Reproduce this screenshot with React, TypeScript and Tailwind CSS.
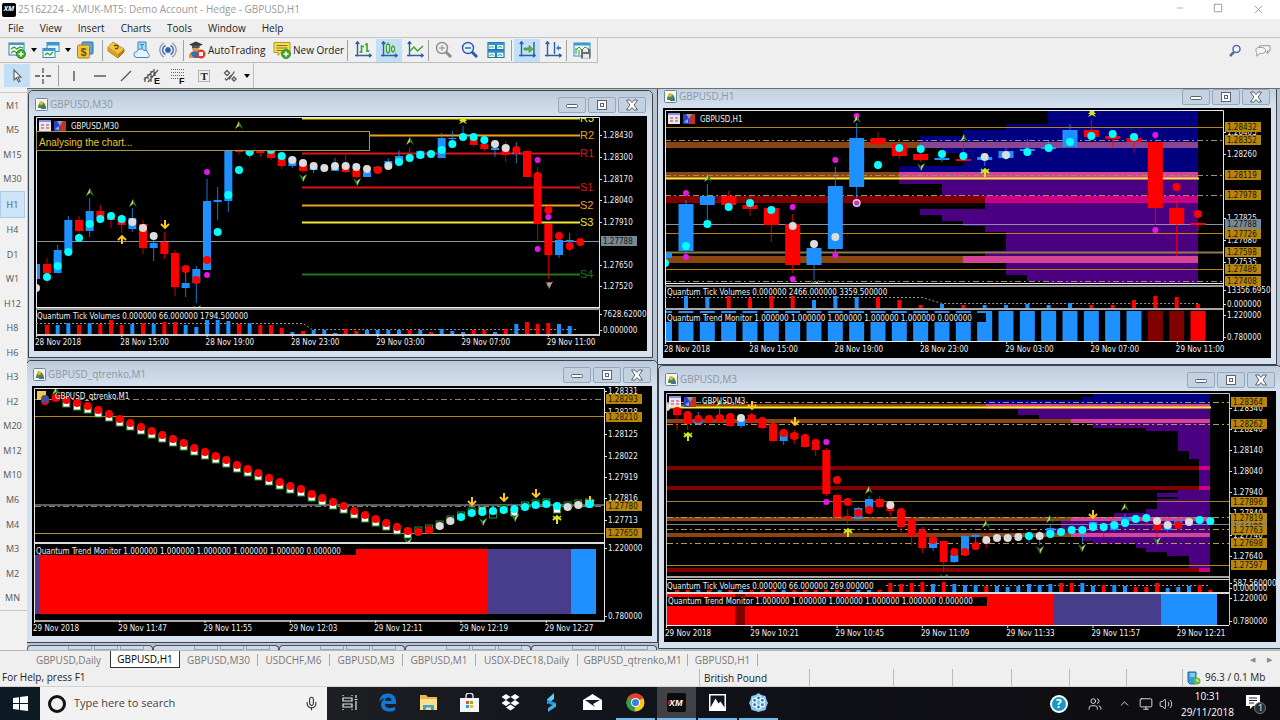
import type { ReactNode } from 'react'
import { ChevronUp, Mic, Minus, Monitor, Square, Users, Volume2, X } from 'lucide-react'

type Tone = 'b' | 'r' | 'c' | 'w' | 'm' | 'k'
// slot, high, body top, body bottom, low, tone
type Candle = [number, number, number, number, number, Tone]
// slot, y, tone
type Dot = [number, number, Tone]
type Mark = [number, number, MarkKind]
type MarkKind = 'up' | 'down' | 'buy' | 'sell' | 'star' | 'starBuy'
// y1, y2, left edge
type Step = [number, number, number]

const tones: Record<Tone, string> = {
  b: '#1e90ff',
  r: '#ff0000',
  c: '#00ffff',
  w: '#dcdcdc',
  m: '#e815e8',
  k: '#800000',
}

const GOLD = '#b8860b'
const BROWN = '#8b4513'

/* ---------- chart primitives ---------- */

function Label({ x, y, children, fill = '#f0f0f0' }: { x: number; y: number; children: ReactNode; fill?: string }) {
  return (
    <text x={x} y={y + 3} fill={fill} className="text-[8px] font-['DejaVu_Sans_Condensed','DejaVu_Sans',sans-serif]">
      {children}
    </text>
  )
}

function Badge({ x, y, text, gray }: { x: number; y: number; text: string; gray?: boolean }) {
  return (
    <g>
      <rect x={x - 2} y={y - 5} width="36" height="10" fill={gray ? '#778899' : GOLD} />
      <Label x={x} y={y} fill="#1a1408">
        {text}
      </Label>
    </g>
  )
}

function HLine({ x1, x2, y, color, w = 1, dash }: { x1: number; x2: number; y: number; color: string; w?: number; dash?: boolean }) {
  return <line x1={x1} x2={x2} y1={y} y2={y} stroke={color} strokeWidth={w} strokeDasharray={dash ? '6 3 2 3' : undefined} />
}

function Candles({ data, x0, step, width }: { data: Candle[]; x0: number; step: number; width: number }) {
  return (
    <g>
      {data.map(([i, high, top, bottom, low, tone]) => {
        const cx = x0 + i * step
        return (
          <g key={i} fill={tones[tone]}>
            <rect x={cx - 0.5} y={high} width="1" height={low - high} opacity="0.8" />
            <rect x={cx - width / 2} y={top} width={width} height={bottom - top} />
          </g>
        )
      })}
    </g>
  )
}

function Dots({ data, x0, step }: { data: Dot[]; x0: number; step: number }) {
  return (
    <g>
      {data.map(([i, y, tone]) => (
        <circle key={`${i}-${y}`} cx={x0 + i * step} cy={y} r={tone === 'm' ? 3 : 4} fill={tones[tone]} />
      ))}
    </g>
  )
}

// each level is a tone and a height: "b9" is a blue bar nine high
function Volumes({ levels, x0, step, base, width }: { levels: string; x0: number; step: number; base: number; width: number }) {
  return (
    <g>
      {levels.split(' ').map((item, i) => {
        const h = Number(item.slice(1))
        return <rect key={i} x={x0 + i * step - width / 2} y={base - h} width={width} height={h} fill={tones[item[0] as Tone]} />
      })}
    </g>
  )
}

function Profile({ steps, right, color }: { steps: Step[]; right: number; color: string }) {
  return (
    <g className="mix-blend-plus-lighter" fill={color} shapeRendering="crispEdges">
      {steps.map(([y1, y2, x]) => (
        <rect key={y1} x={x} y={y1} width={right - x} height={y2 - y1} />
      ))}
    </g>
  )
}

function Marker({ x, y, kind }: { x: number; y: number; kind: MarkKind }) {
  const at = `translate(${x} ${y})`
  if (kind === 'up' || kind === 'down') {
    return (
      <g transform={kind === 'up' ? at : `${at} rotate(180)`}>
        <path d="M0-4 4 4 0 1Z" fill="#2f7a2a" />
        <path d="M0-4-4 4 0 1Z" fill="#a4d65e" />
      </g>
    )
  }
  if (kind === 'star') {
    return <path transform={at} d="M-4-4-1-2 0-4 1-2 4-4 2-1 4 1 2 1 4 4 0 2-4 4-2 1-4 1-2-1Z" fill="#d4e51e" />
  }
  return (
    <g transform={kind === 'sell' ? at : `${at} rotate(180)`} fill="none" stroke={kind === 'starBuy' ? '#d4e51e' : '#ffc81e'}>
      <path d="M0-4V4" strokeWidth="2" />
      <path d="M-4 0 0 4 4 0" strokeWidth="1.8" />
      {kind === 'starBuy' && <path d="M-4 4 0 0 4 4" strokeWidth="1.4" />}
    </g>
  )
}

function Marks({ data }: { data: Mark[] }) {
  return (
    <g>
      {data.map(([x, y, kind]) => (
        <Marker key={`${x}-${y}`} x={x} y={y} kind={kind} />
      ))}
    </g>
  )
}

function Axis({ x, rows }: { x: number; rows: [number, string][] }) {
  return (
    <g>
      {rows.map(([y, text]) => (
        <g key={`${y}${text}`}>
          <line x1={x - 4} x2={x - 1} y1={y + 0.5} y2={y + 0.5} stroke="#e0e0e0" />
          <Label x={x} y={y}>
            {text}
          </Label>
        </g>
      ))}
    </g>
  )
}

function Badges({ x, rows }: { x: number; rows: [number, string][] }) {
  return (
    <g>
      {rows.map(([y, text]) => (
        <Badge key={y} x={x} y={y} text={text} gray={text === '1.27788'} />
      ))}
    </g>
  )
}

function Dates({ x, y, step, labels }: { x: number; y: number; step: number; labels: string[] }) {
  return (
    <g>
      {labels.map((text, i) => (
        <g key={text}>
          <line x1={x + i * step + 0.5} x2={x + i * step + 0.5} y1={y - 8} y2={y - 5} stroke="#e0e0e0" />
          <Label x={x + i * step - 1} y={y}>
            {text}
          </Label>
        </g>
      ))}
    </g>
  )
}

function PanelIcons({ x, y }: { x: number; y: number }) {
  return (
    <g>
      <rect x={x} y={y} width="12" height="11" fill="#e6e6fa" />
      <rect x={x} y={y} width="12" height="2" fill="#8c8ce0" />
      <path d={`M${x + 2} ${y + 4}h3v2h-3zM${x + 2} ${y + 7}h3v2h-3z`} fill="#e08a8a" />
      <path d={`M${x + 7} ${y + 4}h3v2h-3zM${x + 7} ${y + 7}h3v2h-3z`} fill="#e08a8a" />
      <rect x={x + 15} y={y + 1} width="6" height="10" fill="#2a3fd0" />
      <rect x={x + 21} y={y + 1} width="6" height="10" fill="#c03030" />
      <path d={`M${x + 18} ${y + 1}h6l-3 5z`} fill="#8fa0b0" />
      <path d={`M${x + 16} ${y + 9}l4-3v4z`} fill="#7fb4ff" />
    </g>
  )
}

function ChartSvg({ box, name, children }: { box: string; name: string; children: ReactNode }) {
  return (
    <svg viewBox={box} role="img" aria-label={name} className="block h-full w-full isolate bg-black">
      {children}
    </svg>
  )
}

const STEP = 32 / 3

/* ---------- GBPUSD,M30 ---------- */

const m30Candles: Candle[] = [
  [0, 258, 264, 273, 283, 'r'], [1, 245, 250, 273, 273, 'b'], [2, 216, 220, 253, 253, 'b'],
  [3, 216, 220, 231, 234, 'r'], [4, 198, 211, 231, 237, 'b'], [5, 205, 211, 218, 218, 'r'],
  [6, 212, 217, 220, 228, 'r'], [7, 214, 218, 225, 233, 'r'], [8, 208, 218, 229, 232, 'b'],
  [9, 220, 224, 248, 254, 'r'], [10, 234, 243, 248, 261, 'b'], [11, 232, 242, 254, 259, 'r'],
  [12, 250, 253, 287, 296, 'r'], [13, 267, 283, 288, 297, 'b'], [14, 266, 269, 283, 303, 'b'],
  [15, 179, 201, 270, 270, 'b'], [16, 187, 200, 202, 220, 'b'], [17, 151, 151, 201, 212, 'b'],
  [18, 151, 151, 152, 155, 'r'], [19, 151, 151, 154, 158, 'b'], [20, 151, 151, 153, 157, 'r'],
  [21, 151, 151, 158, 160, 'r'], [22, 152, 155, 166, 169, 'r'], [23, 156, 158, 166, 168, 'b'],
  [24, 160, 163, 171, 173, 'r'], [25, 164, 168, 170, 173, 'b'], [27, 158, 168, 171, 171, 'b'],
  [28, 155, 165, 172, 173, 'r'], [29, 164, 170, 177, 178, 'r'], [30, 168, 172, 177, 177, 'b'],
  [31, 166, 167, 171, 173, 'b'], [32, 158, 161, 165, 168, 'b'], [33, 150, 156, 162, 165, 'b'],
  [34, 147, 156, 158, 160, 'r'], [35, 150, 151, 158, 159, 'b'], [36, 150, 152, 154, 157, 'b'],
  [37, 133, 138, 158, 158, 'b'], [38, 131, 138, 139, 148, 'b'], [39, 126, 134, 138, 140, 'b'],
  [40, 136, 138, 145, 147, 'r'], [41, 140, 144, 149, 151, 'r'], [42, 140, 148, 150, 157, 'b'],
  [43, 141, 146, 155, 162, 'r'], [44, 142, 152, 154, 163, 'b'], [45, 151, 151, 177, 177, 'r'],
  [46, 167, 174, 224, 243, 'r'], [47, 224, 224, 255, 279, 'r'], [48, 236, 240, 255, 258, 'b'],
  [49, 233, 240, 242, 251, 'b'],
]

const m30Dots: Dot[] = [
  [0, 277, 'c'], [1, 266, 'c'], [2, 252, 'c'], [3, 238, 'c'], [4, 224, 'c'], [5, 219, 'c'], [6, 216, 'c'],
  [7, 219, 'c'], [8, 222, 'w'], [9, 228, 'w'], [10, 236, 'w'], [13, 269, 'r'], [14, 280, 'r'], [15, 260, 'r'],
  [15, 172, 'm'], [15, 275, 'm'], [16, 232, 'c'], [17, 195, 'c'], [18, 170, 'c'], [19, 152, 'c'], [21, 150, 'c'],
  [22, 156, 'c'], [23, 160, 'w'], [24, 163, 'w'], [25, 166, 'w'], [26, 168, 'w'], [27, 166, 'w'], [28, 166, 'w'],
  [29, 167, 'w'], [30, 169, 'w'], [31, 170, 'r'], [32, 166, 'w'], [33, 162, 'c'], [34, 158, 'c'], [35, 155, 'c'],
  [36, 154, 'c'], [37, 150, 'c'], [38, 144, 'c'], [39, 137, 'c'], [40, 137, 'c'], [41, 140, 'c'], [42, 144, 'w'],
  [43, 148, 'w'], [44, 150, 'r'], [46, 176, 'r'], [46, 160, 'm'], [46, 249, 'm'], [47, 210, 'r'], [47, 217, 'm'],
  [48, 236, 'r'], [49, 246, 'r'], [50, 242, 'r'],
]

const pivots: [number, string, string][] = [
  [118, '#f0e83c', 'R3'],
  [135, '#f0a01e', 'R2'],
  [153, '#e01414', 'R1'],
  [187, '#e01414', 'S1'],
  [205, '#f0a01e', 'S2'],
  [222, '#f0e83c', 'S3'],
  [274, '#1a7a1a', 'S4'],
]

function ChartM30() {
  return (
    <ChartSvg box="34 116 613 235" name="GBPUSD,M30 chart">
      <clipPath id="m30-plot">
        <rect x="37" y="118" width="562" height="189" />
      </clipPath>
      <path d="M36.5 335V117.5H599.5V335" fill="none" stroke="#e8e8e8" />
      <g clipPath="url(#m30-plot)">
        <HLine x1={36} x2={600} y={241.5} color="#8a94a0" />
        {pivots.map(([y, color, name]) => (
          <g key={name}>
            <HLine x1={302} x2={580} y={y + 0.5} color={color} w={2} />
            <text x={580} y={y + 4} fill={color} className="text-[11px] font-['Liberation_Sans',sans-serif]">
              {name}
            </text>
          </g>
        ))}
        <rect x="36" y="264" width="4" height="15" fill={tones.b} />
        <circle cx="36" cy="288" r="4" fill={tones.w} />
        <Candles data={m30Candles} x0={47} step={STEP} width={8} />
        <Dots data={m30Dots} x0={47} step={STEP} />
        <Marks
          data={[
            [90, 192, 'up'], [133, 203, 'up'], [239, 125, 'up'], [410, 141, 'up'], [303, 178, 'down'],
            [357, 182, 'down'], [197, 309, 'down'], [549, 285, 'down'], [463, 120, 'star'], [122, 240, 'buy'], [165, 224, 'sell'],
          ]}
        />
        <circle cx="549" cy="284" r="2" fill="#e87ac0" />
      </g>
      <rect x="36.5" y="131.5" width="333" height="19" fill="#000" stroke="#a8983c" />
      <text x="39" y="146" fill="#e6c832" className="text-[10px] font-['Liberation_Sans',sans-serif]">
        Analysing the chart...
      </text>
      <PanelIcons x={39} y={120} />
      <Label x={71} y={126}>GBPUSD,M30</Label>
      <HLine x1={36} x2={600} y={307.5} color="#f0f0f0" />
      <HLine x1={36} x2={600} y={309} color="#9a9a9a" w={2} />
      <path d="M36 323.5H303L312 329.5H578" fill="none" stroke="#9c9c9c" strokeDasharray="2 2" />
      <Volumes
        x0={47} step={STEP} base={334} width={4}
        levels="r9 b9 b11 r9 b11 r10 r14 r9 b10 r11 b10 r12 r12 b9 b7 b14 b14 b13 r10 b11 r9 r9 r6 b2 r3 b4 b4 b1 r5 r3 b4 b4 b4 b4 r4 b4 r2 b5 b3 b2 r4 r4 b2 r5 b10 r12 r10 r11 b10 b8"
      />
      <Label x={37} y={316}>Quantum Tick Volumes 0.000000 66.000000 1794.500000</Label>
      <HLine x1={36} x2={600} y={335} color="#c8c8c8" w={2} />
      <Dates
        x={36} y={342} step={85.3}
        labels={['28 Nov 2018', '28 Nov 15:00', '28 Nov 19:00', '28 Nov 23:00', '29 Nov 03:00', '29 Nov 07:00', '29 Nov 11:00']}
      />
      <Axis
        x={603}
        rows={[
          [135, '1.28430'], [157, '1.28300'], [179, '1.28170'], [200, '1.28040'], [222, '1.27910'],
          [265, '1.27650'], [286, '1.27520'], [314, '7628.62000'], [330, '0.000000'],
        ]}
      />
      <Badges x={603} rows={[[241, '1.27788']]} />
    </ChartSvg>
  )
}

/* ---------- GBPUSD,H1 ---------- */

const h1Candles: Candle[] = [
  [0, 200, 204, 251, 255, 'b'], [1, 184, 196, 205, 225, 'b'], [2, 191, 196, 205, 205, 'r'],
  [3, 196, 205, 209, 216, 'r'], [4, 206, 208, 225, 242, 'r'], [5, 214, 224, 265, 273, 'r'],
  [6, 244, 248, 265, 280, 'b'], [7, 167, 186, 249, 253, 'b'], [8, 123, 138, 187, 198, 'b'],
  [9, 132, 138, 144, 149, 'r'], [10, 139, 144, 156, 159, 'r'], [11, 150, 154, 160, 162, 'r'],
  [12, 152, 158, 160, 162, 'b'], [13, 143, 159, 161, 161, 'r'], [14, 154, 157, 160, 166, 'b'],
  [15, 148, 151, 158, 160, 'b'], [16, 139, 149, 151, 156, 'b'], [17, 140, 147, 149, 152, 'b'],
  [18, 124, 130, 147, 147, 'b'], [19, 119, 130, 137, 137, 'r'], [20, 134, 136, 139, 147, 'r'],
  [21, 136, 138, 142, 153, 'r'], [22, 135, 142, 208, 225, 'r'], [23, 200, 208, 224, 256, 'r'],
  [24, 222, 223, 225, 231, 'r'],
]

const h1Dots: Dot[] = [
  [0, 246, 'c'], [0, 193, 'm'], [0, 257, 'm'], [1, 224, 'c'], [2, 207, 'c'], [3, 203, 'c'], [4, 210, 'c'],
  [5, 226, 'w'], [5, 207, 'm'], [5, 279, 'm'], [6, 244, 'w'], [7, 237, 'w'], [7, 160, 'm'], [7, 255, 'm'],
  [8, 203, 'w'], [8, 116, 'm'], [9, 165, 'c'], [10, 148, 'c'], [11, 149, 'c'], [12, 154, 'c'], [13, 156, 'c'],
  [14, 157, 'w'], [15, 155, 'w'], [16, 152, 'c'], [17, 148, 'c'], [18, 142, 'c'], [19, 136, 'c'], [20, 134, 'c'],
  [21, 137, 'c'], [22, 135, 'm'], [22, 230, 'm'], [23, 187, 'r'], [24, 214, 'r'],
]

const h1Navy: Step[] = [
  [111, 124, 1048], [124, 130, 1006], [130, 136, 963], [136, 148, 920], [148, 153, 942], [153, 160, 963],
  [160, 166, 963], [166, 172, 899],
]

const h1Indigo: Step[] = [
  [172, 184, 899], [184, 196, 942], [196, 209, 985], [209, 215, 920], [215, 221, 942], [221, 226, 963],
  [226, 232, 985], [232, 251, 1006], [251, 256, 985], [256, 263, 963], [263, 275, 1006], [275, 281, 1027],
  [281, 283, 1048],
]

function ChartH1() {
  const x0 = 686
  const step = 64 / 3
  return (
    <ChartSvg box="663 108 608 250" name="GBPUSD,H1 chart">
      <clipPath id="h1-plot">
        <rect x="666" y="111" width="557" height="173" />
      </clipPath>
      <path d="M665.5 341V110.5H1223.5V341" fill="none" stroke="#e8e8e8" />
      <g clipPath="url(#h1-plot)">
        <rect x="665" y="142" width="533" height="6" fill={BROWN} />
        <rect x="665" y="172" width="533" height="6" fill={BROWN} />
        <rect x="665" y="196" width="533" height="7" fill="#800000" />
        <rect x="665" y="256" width="533" height="7" fill={BROWN} />
        <Profile steps={h1Navy} right={1198} color="#000080" />
        <Profile steps={h1Indigo} right={1198} color="#4b0082" />
        {[127.5, 233.5, 269.5].map((y) => (
          <HLine key={y} x1={665} x2={1223} y={y} color={GOLD} />
        ))}
        {[140.5, 175.5, 195.5, 281.5].map((y) => (
          <HLine key={y} x1={665} x2={1223} y={y} color="#a09060" dash />
        ))}
        <HLine x1={665} x2={1199} y={178.5} color="#ffe83c" w={2} />
        <HLine x1={665} x2={1223} y={224.5} color="#8a94a0" />
        <HLine x1={665} x2={1223} y={252.5} color="#8c7c48" w={2} />
        <rect x="665" y="253" width="7" height="5" fill={tones.b} />
        <circle cx="665" cy="263" r="4" fill={tones.c} />
        <Candles data={h1Candles} x0={x0} step={step} width={15} />
        <Dots data={h1Dots} x0={x0} step={step} />
        <circle cx={x0 + 8 * step} cy="203" r="2.6" fill="#c832c8" />
        <Marks
          data={[
            [708, 178, 'up'], [857, 119, 'up'], [964, 138, 'up'], [921, 167, 'down'], [815, 284, 'down'],
            [1092, 113, 'star'], [985, 173, 'starBuy'],
          ]}
        />
      </g>
      <PanelIcons x={668} y={113} />
      <Label x={700} y={119}>GBPUSD,H1</Label>
      <HLine x1={665} x2={1223} y={283.5} color="#f0f0f0" />
      <HLine x1={665} x2={1223} y={286} color="#9a9a9a" w={2} />
      <path d="M665 297.5H922L942 303.5H1198" fill="none" stroke="#9c9c9c" strokeDasharray="2 2" />
      <Volumes
        x0={x0} step={step} base={308} width={4}
        levels="b12 b11 r12 r10 r12 r12 b8 b12 b11 r11 r8 r3 b4 r3 b3 b3 b4 b3 b5 r3 r3 r8 r12 r11 r4"
      />
      <Label x={667} y={292}>Quantum Tick Volumes 0.000000 2466.000000 3359.500000</Label>
      <HLine x1={665} x2={1223} y={309} color="#a8a8a8" w={2} />
      <rect x="666" y="311" width="6" height="30" fill={tones.b} />
      <Volumes
        x0={x0} step={step} base={341} width={15}
        levels="b30 b30 b30 b30 b30 b30 b30 b30 b30 b30 b30 b30 b30 b30 b30 b30 b30 b30 b30 b30 b30 b30 k30 k30 r30"
      />
      <rect x="666" y="313" width="320" height="9" fill="#000" />
      <Label x={667} y={318}>Quantum Trend Monitor 1.000000 1.000000 1.000000 1.000000 1.000000 0.000000</Label>
      <HLine x1={665} x2={1223} y={341.5} color="#f0f0f0" />
      <Dates
        x={665} y={349} step={85.3}
        labels={['28 Nov 2018', '28 Nov 15:00', '28 Nov 19:00', '28 Nov 23:00', '29 Nov 03:00', '29 Nov 07:00', '29 Nov 11:00']}
      />
      <Axis
        x={1227}
        rows={[
          [132, '1.28405'], [154, '1.28260'], [218, '1.27825'], [240, '1.27680'], [262, '1.27535'],
          [290, '13356.6950'], [304, '0.000000'], [315, '1.220000'], [337, '0.780000'],
        ]}
      />
      <Badges
        x={1227}
        rows={[
          [127, '1.28432'], [140, '1.28352'], [175, '1.28119'], [195, '1.27978'], [224, '1.27788'],
          [234, '1.27726'], [252, '1.27598'], [269, '1.27486'], [281, '1.27408'],
        ]}
      />
    </ChartSvg>
  )
}

/* ---------- GBPUSD_qtrenko,M1 ---------- */

// centre heights of the trend dots, falling part first
const renkoDown = [
  401, 398, 400, 403, 406, 410, 414, 419, 423, 427, 431, 435, 439, 443, 448, 452, 456, 460, 465, 469, 473, 478, 482,
  486, 489, 494, 498, 502, 506, 511, 515, 519, 523, 527, 531,
]
const renkoUp: Dot[] = [
  [35, 532, 'r'], [36, 530, 'r'], [37, 526, 'w'], [38, 521, 'w'], [39, 517, 'c'], [40, 513, 'c'], [41, 512, 'c'],
  [42, 511, 'c'], [43, 510, 'c'], [44, 509, 'c'], [45, 507, 'c'], [46, 505, 'c'], [47, 504, 'c'], [48, 506, 'c'],
  [49, 507, 'w'], [50, 505, 'w'], [51, 504, 'c'],
]

function ChartRenko() {
  return (
    <ChartSvg box="32 386 620 250" name="GBPUSD_qtrenko,M1 chart">
      <clipPath id="renko-plot">
        <rect x="35" y="389" width="569" height="154" />
      </clipPath>
      <path d="M34.5 622V388.5H604.5V622" fill="none" stroke="#e8e8e8" />
      <g clipPath="url(#renko-plot)">
        <HLine x1={35} x2={604} y={399.5} color="#8c8468" dash />
        <HLine x1={35} x2={604} y={416.5} color={GOLD} />
        <HLine x1={35} x2={604} y={505} color="#5a5a68" w={2} />
        <HLine x1={35} x2={604} y={506.5} color="#8c8468" dash />
        <HLine x1={35} x2={604} y={533.5} color="#b09040" />
        <rect x="37" y="391" width="9" height="9" fill="#f0c850" />
        {renkoDown.map((y, i) => (
          <g key={i}>
            {i > 1 && <rect x={45 + i * STEP - 3.5} y={y} width="7" height="7" fill="#fff" stroke="#2e8b2e" />}
            <circle cx={45 + i * STEP} cy={y} r="4" fill={tones.r} />
          </g>
        ))}
        {renkoUp.map(([i, y]) => (
          <rect
            key={i}
            x={45 + i * STEP - 3.5} y={[42, 44, 48].includes(i) ? y : y - 5} width="7" height="7"
            fill={[41, 44, 48].includes(i) ? '#fff' : '#000'} stroke="#2e8b2e"
          />
        ))}
        <Dots data={renkoUp} x0={45} step={STEP} />
        <circle cx="45" cy="399" r="4" fill="#4a4a9c" />
        <Label x={55} y={396}>GBPUSD_qtrenko,M1</Label>
        <Marks
          data={[
            [56, 391, 'up'], [472, 501, 'sell'], [504, 497, 'sell'], [536, 493, 'sell'], [557, 520, 'starBuy'],
            [483, 522, 'down'], [515, 518, 'down'], [408, 542, 'down'], [590, 500, 'sell'],
          ]}
        />
        <circle cx="590" cy="504" r="4" fill={tones.c} />
      </g>
      <HLine x1={35} x2={605} y={543} color="#dcdcdc" w={2} />
      <rect x="35" y="549" width="4" height="65" fill="#483d8b" />
      <rect x="39" y="549" width="448" height="65" fill={tones.r} />
      <rect x="487" y="549" width="84" height="65" fill="#483d8b" />
      <rect x="571" y="549" width="25" height="65" fill={tones.b} />
      <rect x="35" y="546" width="321" height="9" fill="#000" />
      <Label x={36} y={551}>Quantum Trend Monitor 1.000000 1.000000 1.000000 1.000000 1.000000 0.000000</Label>
      <HLine x1={35} x2={605} y={621} color="#a8a8a8" w={2} />
      <Dates
        x={34} y={628} step={85.3}
        labels={['29 Nov 2018', '29 Nov 11:47', '29 Nov 11:55', '29 Nov 12:03', '29 Nov 12:11', '29 Nov 12:19', '29 Nov 12:27']}
      />
      <Axis
        x={608}
        rows={[
          [391, '1.28331'], [412, '1.28228'], [434, '1.28125'], [456, '1.28022'], [477, '1.27919'], [498, '1.27816'],
          [520, '1.27713'], [548, '1.220000'], [616, '0.780000'],
        ]}
      />
      <Badges x={608} rows={[[399, '1.28293'], [417, '1.28210'], [506, '1.27780'], [533, '1.27650']]} />
    </ChartSvg>
  )
}

/* ---------- GBPUSD,M3 ---------- */

const m3Candles: Candle[] = [
  [0, 407, 408, 415, 430, 'r'], [1, 411, 413, 424, 430, 'r'], [2, 412, 419, 424, 425, 'b'],
  [4, 408, 416, 418, 420, 'b'], [5, 413, 415, 426, 427, 'r'], [6, 414, 419, 426, 428, 'b'],
  [7, 413, 415, 422, 424, 'r'], [8, 418, 420, 428, 429, 'r'], [9, 423, 424, 441, 442, 'r'],
  [10, 430, 432, 441, 445, 'b'], [11, 430, 433, 439, 444, 'r'], [12, 433, 436, 447, 448, 'r'],
  [13, 439, 446, 450, 456, 'r'], [14, 448, 450, 494, 496, 'r'], [15, 494, 495, 517, 521, 'r'],
  [16, 509, 516, 518, 526, 'r'], [17, 507, 508, 519, 519, 'b'], [18, 496, 499, 508, 512, 'b'],
  [19, 496, 499, 507, 508, 'r'], [20, 501, 504, 511, 516, 'r'], [21, 508, 510, 527, 532, 'r'],
  [22, 520, 523, 536, 545, 'r'], [23, 527, 531, 548, 553, 'r'], [24, 536, 538, 548, 551, 'b'],
  [25, 541, 541, 562, 572, 'r'], [26, 550, 555, 562, 563, 'b'], [27, 535, 536, 555, 556, 'b'],
  [28, 534, 535, 537, 546, 'b'], [29, 533, 540, 543, 548, 'r'], [31, 535, 537, 539, 542, 'b'],
  [33, 532, 535, 537, 543, 'b'], [34, 531, 535, 536, 545, 'b'], [35, 525, 528, 536, 538, 'b'],
  [36, 528, 530, 532, 536, 'r'], [38, 526, 529, 531, 543, 'b'], [39, 520, 522, 528, 530, 'b'],
  [40, 522, 526, 528, 537, 'r'], [41, 521, 523, 530, 531, 'b'], [42, 514, 517, 525, 526, 'b'],
  [44, 515, 517, 519, 526, 'r'], [45, 518, 522, 530, 538, 'r'], [46, 522, 525, 530, 532, 'b'],
  [47, 519, 520, 524, 528, 'b'], [48, 517, 519, 523, 525, 'b'], [50, 517, 520, 521, 525, 'r'],
]

const m3Dots: Dot[] = [
  [-1, 407, 'w'], [0, 411, 'r'], [1, 415, 'r'], [2, 419, 'r'], [3, 419, 'r'], [4, 418, 'r'], [5, 417, 'r'],
  [6, 418, 'w'], [7, 418, 'r'], [8, 421, 'r'], [9, 427, 'r'], [10, 433, 'r'], [11, 436, 'r'], [12, 438, 'r'],
  [13, 443, 'r'], [14, 442, 'm'], [14, 502, 'm'], [15, 480, 'r'], [16, 502, 'r'], [17, 513, 'r'], [18, 510, 'r'],
  [19, 503, 'r'], [20, 505, 'w'], [21, 512, 'r'], [22, 522, 'r'], [23, 533, 'r'], [24, 540, 'r'], [26, 552, 'r'],
  [27, 552, 'r'], [28, 546, 'r'], [29, 540, 'w'], [30, 538, 'w'], [31, 538, 'w'], [32, 537, 'w'], [33, 536, 'c'],
  [34, 536, 'w'], [35, 534, 'c'], [36, 532, 'c'], [37, 530, 'c'], [38, 530, 'c'], [39, 527, 'c'], [40, 527, 'c'],
  [41, 525, 'c'], [42, 523, 'c'], [43, 519, 'c'], [44, 518, 'c'], [45, 521, 'w'], [46, 525, 'w'], [47, 525, 'r'],
  [48, 522, 'w'], [49, 520, 'c'], [50, 521, 'c'],
]

const m3Navy: Step[] = [[394, 397, 1093], [397, 400, 1082], [400, 404, 986]]

const m3Indigo: Step[] = [
  [404, 409, 986], [409, 415, 1018], [415, 419, 1039], [419, 423, 1071], [423, 428, 1093], [428, 431, 1146],
  [431, 451, 1178], [451, 459, 1189], [459, 490, 1199], [490, 493, 1178], [493, 497, 1157], [497, 499, 1178],
  [499, 509, 1157], [509, 513, 1146], [513, 517, 1114], [517, 521, 1071], [521, 528, 1061], [528, 533, 1050],
  [533, 537, 1071], [537, 541, 1082], [541, 544, 1093], [544, 548, 1136], [548, 552, 1146], [552, 556, 1167],
  [556, 568, 1189], [568, 572, 1199],
]

const m3Bands: [number, number, string][] = [
  [404, 3, BROWN], [419, 4, BROWN], [466, 4, '#800000'], [486, 4, '#800000'],
  [517, 4, BROWN], [533, 4, BROWN], [568, 4, '#800000'],
]

function ChartM3() {
  return (
    <ChartSvg box="664 391 612 251" name="GBPUSD,M3 chart">
      <clipPath id="m3-plot">
        <rect x="667" y="394" width="562" height="182" />
      </clipPath>
      <path d="M666.5 625V393.5H1229.5V625" fill="none" stroke="#c8c8c8" />
      <g clipPath="url(#m3-plot)">
        {m3Bands.map(([y, h, color]) => (
          <rect key={y} x="667" y={y} width="543" height={h} fill={color} />
        ))}
        <Profile steps={m3Navy} right={1210} color="#000080" />
        <Profile steps={m3Indigo} right={1210} color="#4b0082" />
        {[402.5, 424.5, 517.5, 529.5, 543.5].map((y) => (
          <HLine key={y} x1={667} x2={1229} y={y} color="#b09a58" dash />
        ))}
        <HLine x1={667} x2={1211} y={407.5} color="#ffee28" w={2} />
        <HLine x1={667} x2={1229} y={501.5} color="#a08030" />
        <HLine x1={667} x2={1229} y={524.5} color="#7a848e" />
        <HLine x1={667} x2={1229} y={565.5} color={GOLD} />
        <Candles data={m3Candles} x0={677} step={STEP} width={8} />
        <Dots data={m3Dots} x0={677} step={STEP} />
        <Marks
          data={[
            [720, 403, 'up'], [869, 490, 'up'], [752, 405, 'sell'], [795, 421, 'sell'], [688, 437, 'starBuy'],
            [848, 533, 'starBuy'], [944, 578, 'down'], [986, 524, 'up'], [1050, 519, 'up'], [1125, 507, 'up'],
            [1040, 550, 'down'], [1082, 548, 'down'], [1157, 541, 'down'], [1093, 514, 'sell'],
          ]}
        />
      </g>
      <PanelIcons x={669} y={396} />
      <Label x={702} y={401}>GBPUSD,M3</Label>
      <HLine x1={667} x2={1229} y={577} color="#a8a8a8" w={2} />
      <HLine x1={667} x2={1229} y={579.5} color="#d0d0d0" />
      <path d="M886 585.5H1210" stroke="#9c9c9c" strokeDasharray="2 2" />
      <Volumes
        x0={677} step={STEP} base={592} width={4}
        levels="r2 r2 b2 r2 b2 r2 b2 r2 r2 r2 b2 r2 r2 r2 r2 r2 r2 b2 b2 r2 r9 r8 r9 r10 b8 r10 b8 b7 b7 r6 b6 b5 b6 b8 b7 b8 r9 r9 b9 b6 r7 b7 b6 r5 r5 r9 b4 b5 b6 r7 r2"
      />
      <Label x={667} y={586}>Quantum Tick Volumes 0.000000 66.000000 269.000000</Label>
      <HLine x1={667} x2={1229} y={593} color="#dcdcdc" w={2} />
      <rect x="667" y="594" width="387" height="31" fill={tones.r} />
      <rect x="735" y="594" width="10" height="31" fill={tones.k} />
      <rect x="1054" y="594" width="107" height="31" fill="#483d8b" />
      <rect x="1161" y="594" width="56" height="31" fill={tones.b} />
      <rect x="667" y="597" width="320" height="9" fill="#000" />
      <Label x={668} y={601}>Quantum Trend Monitor 1.000000 1.000000 1.000000 1.000000 1.000000 0.000000</Label>
      <HLine x1={667} x2={1229} y={625.5} color="#f0f0f0" />
      <Dates
        x={666} y={633} step={85.3}
        labels={['29 Nov 2018', '29 Nov 10:21', '29 Nov 10:45', '29 Nov 11:09', '29 Nov 11:33', '29 Nov 11:57', '29 Nov 12:21']}
      />
      <Axis
        x={1233}
        rows={[
          [408, '1.28340'], [429, '1.28240'], [450, '1.28140'], [471, '1.28040'], [492, '1.27940'], [513, '1.27840'],
          [535, '1.27740'], [556, '1.27640'], [583, '587.560000'], [588, '0.000000'], [598, '1.220000'], [621, '0.780000'],
        ]}
      />
      <Badges
        x={1233}
        rows={[
          [524, '1.27788'], [402, '1.28364'], [424, '1.28262'], [502, '1.27896'], [518, '1.27819'], [530, '1.27763'],
          [543, '1.27698'], [565, '1.27597'],
        ]}
      />
    </ChartSvg>
  )
}

/* ---------- windows ---------- */

function ChartIcon() {
  return (
    <svg viewBox="0 0 13 13" className="h-[13px] w-[13px]">
      <rect x="0.5" y="0.5" width="12" height="12" rx="1" fill="#f4f8ee" stroke="#6f8296" />
      <path d="M3 10c0-4 2-6 4-6s4 3 4 6z" fill="#4f8a3c" />
      <circle cx="6" cy="5" r="2" fill="#e0b83c" />
      <path d="M6 11c0-2 1-3 2.5-3S11 9 11 11z" fill="#3c6ea8" />
    </svg>
  )
}

function FrameButton({ label, children }: { label: string; children: ReactNode }) {
  return (
    <button
      aria-label={label}
      className="flex h-4 w-7 items-center justify-center rounded-[2px] border border-[#96a7bb] bg-[#c3d1e1]"
    >
      <svg viewBox="0 0 14 12" className="h-3 w-3.5" fill="#fff" stroke="#5a6472">
        {children}
      </svg>
    </button>
  )
}

function ChartWindow({ title, place, children }: { title: string; place: string; children: ReactNode }) {
  return (
    <section
      className={`absolute flex flex-col rounded-t-[5px] border border-[#3c434c] bg-[#d5e1ee] px-[5px] pb-[6px] ${place}`}
    >
      <header className="-mx-[5px] flex h-[25px] shrink-0 items-center rounded-t-[5px] bg-linear-to-b from-[#bccbdc] to-[#d5e1ee] px-1.5 pt-0.5">
        <ChartIcon />
        <h2 className="ml-0.5 flex-1 text-[10px] text-[#8d98a5]">{title}</h2>
        <div className="flex gap-0.5">
          <FrameButton label="Minimize">
            <rect x="1.5" y="5.5" width="11" height="3" rx="1" />
          </FrameButton>
          <FrameButton label="Maximize">
            <rect x="2.5" y="1.5" width="9" height="9" />
            <rect x="5.5" y="4.5" width="3" height="3" />
          </FrameButton>
          <FrameButton label="Close">
            <path d="M1.500 1h3.500l2 2.500L9 1h3.500L9.200 6l3.300 5H9L7 8.500 5 11H1.500L4.800 6z" />
          </FrameButton>
        </div>
      </header>
      <div className="min-h-0 flex-1">{children}</div>
    </section>
  )
}

/* ---------- toolbar ---------- */

const axes = (
  <g fill="none" stroke="#2c5fa8" strokeWidth="1.4">
    <path d="M3.5 1v14.5M1 14.5h16" />
    <path d="M1.8 3 3.5.8 5.2 3M15 12.8l2.2 1.7L15 16.2" />
  </g>
)

const plus = (
  <g>
    <circle cx="13" cy="13" r="4.5" fill="#3fae2a" stroke="#1f7a18" strokeWidth="0.8" />
    <path d="M13 10.5v5M10.5 13h5" stroke="#fff" strokeWidth="1.5" />
  </g>
)

const icons: Record<string, ReactNode> = {
  newChart: (
    <>
      <rect x="1" y="2" width="15" height="12" fill="#f2faf0" stroke="#3a78b4" />
      <rect x="1" y="2" width="15" height="2" fill="#3a9ad4" />
      <path d="M3 8l3-2 3 2 3-2 3 1M3 12l3-2 3 2" fill="none" stroke="#2f9a35" strokeWidth="1.2" />
      {plus}
    </>
  ),
  profiles: (
    <>
      <rect x="5" y="1.5" width="12" height="9" fill="#e4f2fb" stroke="#3a8ac4" />
      <rect x="5" y="1.5" width="12" height="3" fill="#3a9ad4" />
      <rect x="1" y="7.5" width="12" height="9" fill="#f2faf0" stroke="#3a8ac4" />
      <rect x="1" y="7.5" width="12" height="2.5" fill="#3a9ad4" />
      <path d="M3 14l2-2 3 2 3-3" fill="none" stroke="#2f9a35" strokeWidth="1.2" />
    </>
  ),
  marketWatch: (
    <>
      <rect x="6" y="1" width="11" height="12" rx="1" fill="#5aa4dc" stroke="#2c6cac" />
      <rect x="1.5" y="4" width="12" height="13" rx="1.5" fill="#f4c63c" stroke="#b07c14" />
      <text x="4.6" y="14.5" fill="#7a4e08" className="text-[11px] font-bold font-['Liberation_Sans',sans-serif]">$</text>
    </>
  ),
  navigator: (
    <>
      <path d="M1 6 6 1l11 7v3l-6 6L1 10z" fill="#b88414" stroke="#8a6410" strokeWidth="0.8" />
      <path d="M1 6 6 1l11 7-6 5z" fill="#f0c440" />
      <path d="M1 6v4l10 7v-4z" fill="#d8a024" />
      <path d="M7 5c2-1.500 4.500-.5 4 1.500-.4 1.500-2.600 1.600-2.800.4" fill="none" stroke="#6a4a08" strokeWidth="1.3" />
    </>
  ),
  cloud: (
    <>
      <path d="M5 1h8v10H5z" fill="#a8dcf6" stroke="#2c86c4" />
      <path d="M7 3.500h4M9 3.500v5" stroke="#2c86c4" />
      <path d="M4 16.500a3 3 0 0 1 0-6 4 4 0 0 1 7-1 3.500 3.500 0 0 1 4 3 2.200 2.200 0 0 1 0 4z" fill="#eaf4fc" stroke="#3a88cc" />
    </>
  ),
  signals: (
    <g fill="none" stroke="#4a70b8">
      <path d="M5 2a8 8 0 0 0 0 14M13 2a8 8 0 0 1 0 14" stroke="#8c94a4" strokeWidth="1.2" />
      <path d="M6.500 4.500a5 5 0 0 0 0 9M11.500 4.500a5 5 0 0 1 0 9" strokeWidth="1.4" />
      <circle cx="9" cy="9" r="2.500" fill="#2c5cb0" />
    </g>
  ),
  autoTrading: (
    <>
      <path d="M1 17c0-5 3-7 6-7s6 2 6 7z" fill="#3a6cb8" />
      <circle cx="7.500" cy="7" r="3.500" fill="#d49a5c" />
      <path d="M1 3.500 8 .5l7 3-7 3.200z" fill="#3c3c3c" />
      <path d="M4 4.500h7.500v2.500H4z" fill="#555" />
      <path d="M2 12l4 5H1z" fill="#e89a28" />
      <circle cx="13" cy="13" r="4.500" fill="#e03a2c" />
      <rect x="11" y="11" width="4" height="4" fill="#fff" />
    </>
  ),
  newOrder: (
    <>
      <path d="M1 1.500h16v10h-9l-3 3v-3H1z" fill="#f6dc5c" stroke="#b8961c" />
      <path d="M3.500 4.500h11M3.500 7h11M3.500 9.500h7" stroke="#8c7414" />
      {plus}
    </>
  ),
  bars: (
    <>
      {axes}
      <path d="M7.500 4v8M5.500 11h2M7.500 5.500h2.500M13 2v9M11 3.500h2M13 10h2.500" fill="none" stroke="#38a428" strokeWidth="1.600" />
    </>
  ),
  candles: (
    <>
      {axes}
      <path d="M8 1.500v2M8 11v2M13 4v2M13 10v2M6.500 3.500h3V11h-3zM11.500 6h3v4h-3z" fill="#d8f0d0" stroke="#38a428" strokeWidth="1.200" />
    </>
  ),
  line: (
    <>
      {axes}
      <path d="M4 10l4-4 3.500 4L17 5" fill="none" stroke="#38a428" strokeWidth="1.500" />
    </>
  ),
  zoomIn: (
    <g fill="#f0f0f0" stroke="#8c8c8c">
      <path d="M10.500 10.500 16 16" strokeWidth="3" />
      <circle cx="7" cy="7" r="5.500" strokeWidth="1.400" />
      <path d="M7 4v6M4 7h6" />
    </g>
  ),
  zoomOut: (
    <g fill="#e0f0fc" stroke="#2c5ca8">
      <path d="M10.500 10.500 16 16" strokeWidth="3" />
      <circle cx="7" cy="7" r="5.500" strokeWidth="1.400" />
      <path d="M4 7h6" strokeWidth="1.400" />
    </g>
  ),
  tiles: (
    <>
      <path d="M1 1.500h7.500v7H1zM9.500 1.500H17v7H9.500zM1 9.500h7.500v7H1zM9.500 9.500H17v7H9.500z" fill="#eefaee" stroke="#1f7ac0" strokeWidth="1.200" />
      <path d="M1 3h16M1 10.800h16" stroke="#2c94dc" strokeWidth="2" />
      <path d="M2.500 6.500 4.500 5.500l2 1M11 6.500l2-1 2 1M2.500 14.500l2-1 2 1M11 14.500l2-1 2 1" fill="none" stroke="#38a428" />
    </>
  ),
  scroll: (
    <>
      {axes}
      <path d="M16 1v12" stroke="#2c5fa8" strokeWidth="1.400" />
      <path d="M6 7h5V4.500L15 8l-4 3.500V9H6z" fill="#58b848" stroke="#2a8a20" strokeWidth="0.600" />
    </>
  ),
  shift: (
    <>
      {axes}
      <path d="M10.500 1v12" stroke="#2c5fa8" strokeWidth="1.400" />
      <path d="M12 7l3-2.800V6h2v2h-2v1.800z" fill="#3a7cd4" />
    </>
  ),
  template: (
    <>
      <rect x="1" y="2" width="16" height="13" fill="#eefaf4" stroke="#3a8ac4" />
      <rect x="1" y="2" width="16" height="2.500" fill="#3a9ad4" />
      <path d="M3 9l3-3 3 3 3-3 4 2M3 7v6M6 9v5" fill="none" stroke="#2f9a35" />
      <rect x="8" y="8" width="9.500" height="9.500" fill="#6c6c6c" />
      <path d="M10 8h5v3h-5zM10 13h6v4.500h-6z" fill="#e8e8e8" />
    </>
  ),
  cursor: <path d="M6 3v10l2.500-2.300L10.500 15l1.500-.8-2-4h3z" fill="#fff" stroke="#666" strokeWidth="1.200" />,
  crosshair: <path d="M9 1v5M9 8v2M9 12v5M1 9h5M8 9h2M12 9h5" stroke="#4c4c4c" strokeWidth="1.300" />,
  vline: <path d="M9 4v10" stroke="#444" strokeWidth="1.300" />,
  hline: <path d="M3 9h12" stroke="#444" strokeWidth="1.300" />,
  trend: <path d="M4 14 14 4" stroke="#555" strokeWidth="1.300" />,
  channel: (
    <>
      <path d="M1 13 10 4M5 15l10-12M2 10v5M5 7v5M8 4v6M11 2v7M8 9v6M12 5v4" stroke="#5a5a5a" fill="none" strokeWidth="1.300" />
      <text x="11" y="17" fill="#111" className="text-[9px] font-bold font-['Liberation_Sans',sans-serif]">E</text>
    </>
  ),
  fibo: (
    <>
      <path d="M2 2.500h13M2 5.500h13M2 8.500h13M2 11.500h7" stroke="#666" strokeDasharray="1 1" />
      <text x="10" y="17" fill="#111" className="text-[9px] font-bold font-['Liberation_Sans',sans-serif]">F</text>
    </>
  ),
  textTool: (
    <>
      <rect x="3.500" y="3.500" width="11" height="11" fill="none" stroke="#777" strokeDasharray="1 1" />
      <text x="5.500" y="13" fill="#222" className="text-[11px] font-bold font-['Liberation_Serif',serif]">T</text>
    </>
  ),
  shapes: (
    <path d="M3.500 6l2.500-2.500L8.500 6 6 8.500zM11 12l2-2 2 2-2 2zM8 12.500l5.500-8M4 11.500l1.500 1.500 5-5" fill="none" stroke="#5a5a5a" strokeWidth="1.300" />
  ),
}

function Icon({ name }: { name: string }) {
  return (
    <svg viewBox="0 0 18 18" className="h-[18px] w-[18px] shrink-0" aria-hidden="true">
      {icons[name]}
    </svg>
  )
}

function Tool({ name, label, active }: { name: string; label: string; active?: boolean }) {
  return (
    <button
      aria-label={label}
      className={`flex h-[23px] w-[26px] items-center justify-center ${active ? 'bg-[#c3dff5]' : ''}`}
    >
      <Icon name={name} />
    </button>
  )
}

function Caret({ label }: { label: string }) {
  return (
    <button aria-label={label} className="flex h-[23px] w-2 items-center justify-center">
      <span className="border-x-[3px] border-t-[4px] border-x-transparent border-t-black" />
    </button>
  )
}

const Sep = () => <span className="h-[21px] w-px bg-[#a0a0a0]" />

function Toolbars() {
  return (
    <>
      <div className="flex shrink-0 items-center border-t border-[#c4c4c4] bg-[#efefef] pr-1">
        <div className="flex h-[25px] items-center border-r border-b border-[#bdbdbd] pr-0.5 pl-1">
          <Tool name="newChart" label="New chart" />
          <Caret label="New chart menu" />
          <Tool name="profiles" label="Profiles" />
          <Caret label="Profiles menu" />
          <Tool name="marketWatch" label="Market watch" />
          <span className="w-1" />
          <Sep />
          <Tool name="navigator" label="Navigator" />
          <Tool name="cloud" label="Virtual hosting" />
          <Tool name="signals" label="Signals" />
          <span className="w-0.5" />
          <Sep />
          <button className="flex h-[23px] w-[87px] items-center gap-0.5 pl-1 text-[10px] whitespace-nowrap">
            <Icon name="autoTrading" />
            AutoTrading
          </button>
          <button className="flex h-[23px] w-[76px] items-center gap-0.5 pl-0.5 text-[10px] whitespace-nowrap">
            <Icon name="newOrder" />
            New Order
          </button>
          <Sep />
          <span className="w-0.5" />
          <Tool name="bars" label="Bar chart" />
          <Tool name="candles" label="Candlesticks" active />
          <Tool name="line" label="Line chart" />
          <Sep />
          <span className="w-0.5" />
          <Tool name="zoomIn" label="Zoom in" />
          <Tool name="zoomOut" label="Zoom out" />
          <Tool name="tiles" label="Tile windows" />
          <span className="w-0.5" />
          <Sep />
          <span className="w-0.5" />
          <Tool name="scroll" label="Auto scroll" active />
          <Tool name="shift" label="Chart shift" />
          <Sep />
          <span className="w-0.5" />
          <Tool name="template" label="Templates" />
        </div>
        <div className="ml-auto flex items-center gap-3 pr-1">
          <button aria-label="Search">
            <svg viewBox="0 0 14 14" className="h-3.5 w-3.5" fill="#eef6ff" stroke="#5a6c9c">
              <path d="M6 8 2 12" strokeWidth="2.5" />
              <circle cx="8.500" cy="5" r="3.500" strokeWidth="1.500" />
            </svg>
          </button>
          <button aria-label="Messages">
            <svg viewBox="0 0 20 16" className="h-3.5 w-[18px]" fill="#f6f6f6" stroke="#8a8a8a">
              <path d="M6 2h12v6h-3l1 3-4-3H6z" />
              <path d="M2 6c0-3 11-3 11 1s-5 4-7 4l-3 3v-4C2 9 2 8 2 6z" />
            </svg>
          </button>
        </div>
      </div>
      <div className="flex h-[25px] shrink-0 items-center bg-[#efefef]">
        <div className="flex h-[25px] items-center border-r border-[#bdbdbd] pl-1">
          <Tool name="cursor" label="Cursor" active />
          <Tool name="crosshair" label="Crosshair" />
          <span className="w-0.5" />
          <Sep />
          <span className="w-0.5" />
          <Tool name="vline" label="Vertical line" />
          <Tool name="hline" label="Horizontal line" />
          <Tool name="trend" label="Trendline" />
          <Tool name="channel" label="Equidistant channel" />
          <Tool name="fibo" label="Fibonacci retracement" />
          <Tool name="textTool" label="Text" />
          <Tool name="shapes" label="Shapes" />
          <Caret label="Shapes menu" />
          <span className="w-0.5" />
        </div>
      </div>
    </>
  )
}

const periods = [
  'M1', 'M5', 'M15', 'M30', 'H1', 'H4', 'D1', 'W1', 'H12', 'H8', 'H6',
  'H3', 'H2', 'M20', 'M12', 'M10', 'M6', 'M4', 'M3', 'M2', 'MN',
]

const tabs: [string, string][] = [
  ['GBPUSD,Daily', 'w-[83px]'],
  ['GBPUSD,H1', 'w-[70px]'],
  ['GBPUSD,M30', 'w-[78px]'],
  ['USDCHF,M6', 'w-[72px]'],
  ['GBPUSD,M3', 'w-[73px]'],
  ['GBPUSD,M1', 'w-[73px]'],
  ['USDX-DEC18,Daily', 'w-[102px]'],
  ['GBPUSD_qtrenko,M1', 'w-[110px]'],
  ['GBPUSD,H1', 'w-[70px]'],
]

/* ---------- taskbar ---------- */

const apps: { label: string; icon: ReactNode; open?: boolean; active?: boolean }[] = [
  {
    label: 'Task View',
    icon: <path d="M3 5h9v3H3zM3 11h9v3H3zM3 2v1M12 2v1M3 16v1M12 16v1M16 2v3M16 8v9M14.500 6.500h3" fill="none" stroke="#e8e8e8" strokeWidth="1.2" />,
  },
  {
    label: 'Edge',
    icon: <path d="M1 9C2 3 5 .5 10 .5c5 0 8 3.500 8 8V11H7c0 3 2 4 5 4 2 0 3.500-.5 5-1.300v3.500C15.500 18 14 18.500 11.500 18.500 6.500 18.500 3 16 3 11.500 3 8.500 5 6.500 7 5.500 4.500 5.500 2.500 7 1 9zm6-1.200h6.500c0-2-1-3.300-3.100-3.300S7.200 6 7 7.800z" fill="#0f78d4" />,
  },
  {
    label: 'File Explorer',
    icon: (
      <>
        <path d="M1 2h6l2 2h9v13H1z" fill="#e8b84c" />
        <path d="M1 6h17v11H1z" fill="#fbe08c" />
        <path d="M4 17v-5h11v5h-3v-2.500H7V17z" fill="#3aa4e0" />
      </>
    ),
  },
  {
    label: 'Store',
    icon: (
      <>
        <path d="M6 6V3a3.500 3 0 0 1 7 0v3" fill="none" stroke="#f0f0f0" strokeWidth="1.300" />
        <path d="M0 5h19v14H0z" fill="#f4f4f4" />
        <path d="M6 8h3v3H6z" fill="#e8502c" />
        <path d="M10 8h3v3h-3z" fill="#7cb82c" />
        <path d="M6 12h3v3H6z" fill="#1fa0e8" />
        <path d="M10 12h3v3h-3z" fill="#f8b81c" />
      </>
    ),
  },
  {
    label: 'Dropbox',
    icon: <path d="M5 1 9.500 4 5 7 .5 4zM14 1l4.500 3L14 7 9.500 4zM5 7l4.500 3L5 13 .5 10zM14 7l4.500 3-4.500 3-4.500-3zM9.500 11.500 14 14.500l-4.500 3-4.500-3z" fill="#fff" />,
  },
  {
    label: 'Trader',
    icon: (
      <>
        <path d="M12 0 5 6.500V11l7-5z" fill="#5ad4f4" />
        <path d="M5 6.500 14 10v3.500L5 10z" fill="#2494e4" />
        <path d="M14 10v3.500L6 19v-4z" fill="#3ab4ec" />
      </>
    ),
  },
  {
    label: 'Mail',
    icon: (
      <>
        <path d="M0 7 9.500 1 19 7v10H0z" fill="#fff" />
        <path d="M2 7h15l-7 4 2 3z" fill="#15181f" />
      </>
    ),
  },
  {
    label: 'Chrome',
    open: true,
    icon: (
      <>
        <circle cx="9.500" cy="9.500" r="9" fill="#f8c81c" />
        <path d="M9.500 9.500 1.700 5A9 9 0 0 1 17.300 5z" fill="#e0402c" />
        <path d="M9.500 9.500 1.700 5a9 9 0 0 0 7 13.500z" fill="#2ca04c" />
        <circle cx="9.500" cy="9.500" r="4.500" fill="#fff" />
        <circle cx="9.500" cy="9.500" r="3.500" fill="#3a80e8" />
      </>
    ),
  },
  {
    label: 'XM MT5',
    open: true,
    active: true,
    icon: (
      <>
        <rect width="19" height="19" rx="2" fill="#0c0c0c" />
        <path d="M1 7l3 2-3 3z" fill="#d02020" />
        <text x="2" y="13" fill="#fff" className="text-[9px] font-bold italic font-['Liberation_Sans',sans-serif]">XM</text>
      </>
    ),
  },
  {
    label: 'Photos',
    open: true,
    icon: (
      <>
        <rect x="1" y="1" width="17" height="17" fill="#fff" />
        <path d="M2.500 2.500h14v12l-4-6-2 2-3-5-5 9z" fill="#14161c" />
      </>
    ),
  },
  {
    label: 'Meeting',
    open: true,
    icon: (
      <>
        <path d="M9.500 0l3 2 4 1 1 4 1.500 3-1.500 3-1 4-4 1-3 1-3-1-4-1-1-4L0 10l1.500-3 1-4 4-1z" fill="#8cc8ee" />
        <g fill="#2c78b8" stroke="#e4f4fc" strokeWidth="1.200">
          <circle cx="9.500" cy="5" r="2" />
          <circle cx="9.500" cy="14" r="2" />
          <circle cx="5.600" cy="7.300" r="2" />
          <circle cx="13.400" cy="7.300" r="2" />
          <circle cx="5.600" cy="11.700" r="2" />
          <circle cx="13.400" cy="11.700" r="2" />
        </g>
      </>
    ),
  },
]

function Taskbar() {
  return (
    <footer className="flex h-[33px] shrink-0 items-stretch bg-linear-to-r from-[#2a2c30] via-[#11131a] to-[#0d0c10] text-white">
      <button aria-label="Start" className="flex w-10 items-center justify-center bg-[#0c1b24]">
        <svg viewBox="0 0 15 15" className="h-[15px] w-[15px]" fill="#fff">
          <path d="M0 2l6-.8V7H0zM7 1l8-1v7H7zM0 8h6v5.800L0 13zM7 8h8v7l-8-1z" />
        </svg>
      </button>
      <label className="flex w-[287px] items-center bg-[#f2f2f2] px-2 text-[#333]">
        <span className="h-[18px] w-[18px] rounded-full border-[3px] border-[#111]" />
        <input
          aria-label="Search"
          placeholder="Type here to search"
          className="ml-2 min-w-0 flex-1 bg-transparent text-[11px] outline-none placeholder:text-[#444]"
        />
        <Mic size={15} strokeWidth={1.8} />
      </label>
      <nav aria-label="Apps" className="flex pl-1">
        {apps.map((app, i) => (
          <button
            key={app.label}
            aria-label={app.label}
            className={`flex items-center justify-center border-b-2 ${i === 0 ? 'w-[36px]' : 'mx-px w-[39px]'} ${
              app.open ? 'border-[#76b9ed]' : 'border-transparent'
            } ${app.active ? 'bg-[#414248]' : ''} ${i === 7 ? 'ml-[3px]' : ''}`}
          >
            <svg viewBox="0 0 19 19" className="h-[19px] w-[19px]">
              {app.icon}
            </svg>
          </button>
        ))}
      </nav>
      <div className="ml-auto flex items-center pr-3.5">
        <button
          aria-label="Help"
          className="mr-5 flex h-[18px] w-[18px] items-center justify-center rounded-full border-2 border-white bg-[#1a98c4] text-[12px] font-bold"
        >
          ?
        </button>
        <button aria-label="People" className="mr-4">
          <Users size={14} strokeWidth={1.4} />
        </button>
        <button aria-label="Hidden icons" className="mr-2">
          <ChevronUp size={13} strokeWidth={1.5} />
        </button>
        <button aria-label="Network" className="mr-1.5">
          <Monitor size={14} strokeWidth={1.4} />
        </button>
        <button aria-label="Volume" className="mr-2">
          <Volume2 size={14} strokeWidth={1.4} />
        </button>
        <time className="mr-3 text-center text-[10px] leading-4">
          10:31
          <br />
          29/11/2018
        </time>
        <button aria-label="Notifications" className="relative h-5 w-5">
          <svg viewBox="0 0 20 20" className="h-5 w-5">
            <path d="M0 1h14v11H7l-3 3v-3H0z" fill="#fff" />
            <path d="M3 4h8M3 6.500h8M3 9h5" stroke="#222" />
            <circle cx="14" cy="14" r="5.500" fill="#2a2a2c" stroke="#777" />
          </svg>
          <span className="absolute top-2 left-3 text-[9px] leading-3">1</span>
        </button>
      </div>
    </footer>
  )
}

export default function App() {
  return (
    <div className="flex h-screen flex-col overflow-hidden bg-[#efefef] font-['Open_Sans','Noto_Sans',sans-serif] text-[10px] text-[#222]">
      <header className="flex h-[19px] shrink-0 items-center bg-white pl-0.5">
        <span className="flex h-3.5 w-3.5 items-center justify-center rounded-[2px] bg-black text-[7px] font-bold text-white italic">
          XM
        </span>
        <h1 className="ml-0.5 flex-1 text-[10px] text-[#999]">25162224 - XMUK-MT5: Demo Account - Hedge - GBPUSD,H1</h1>
        <div className="flex text-[#8a8a8a]">
          <button aria-label="Minimize" className="flex w-10 justify-center">
            <Minus size={10} strokeWidth={1.5} />
          </button>
          <button aria-label="Restore" className="flex w-9 justify-center">
            <Square size={10} strokeWidth={2} />
          </button>
          <button aria-label="Close" className="flex w-11 justify-center">
            <X size={13} strokeWidth={1.5} />
          </button>
        </div>
      </header>

      <nav aria-label="Menu" className="flex h-[18px] shrink-0 items-center gap-4 pl-2">
        {['File', 'View', 'Insert', 'Charts', 'Tools', 'Window', 'Help'].map((item) => (
          <button key={item}>{item}</button>
        ))}
      </nav>

      <Toolbars />

      <main className="flex min-h-0 flex-1">
        <aside className="w-[27px] shrink-0 bg-[#f1f1f1] pt-1">
          <div className="flex h-[519px] flex-col border-t border-b border-[#c8c8c8]">
            {periods.map((p) => (
              <button
                key={p}
                className={`w-[25px] flex-1 text-[9px] text-[#555] ${p === 'H1' ? 'border border-[#a8cdec] bg-[#cfe5f7]' : ''}`}
              >
                {p}
              </button>
            ))}
          </div>
        </aside>

        {/* window canvas */}
        <div className="relative flex-1 overflow-hidden border-t border-[#6e6e6e] bg-[#b9c3ce]">
          <div className="absolute bottom-0 left-0 flex h-[5px] w-[630px]">
            {['a', 'b', 'c', 'd', 'e'].map((k) => (
              <div key={k} className="flex flex-1 justify-end gap-0.5 rounded-t-[4px] border-x border-t border-[#4a525c] bg-[#cddae8] pr-2">
                <span className="w-6 border-x border-b border-[#96a7bb]" />
                <span className="w-6 border-x border-b border-[#96a7bb]" />
                <span className="w-6 border-x border-b border-[#96a7bb]" />
              </div>
            ))}
          </div>
          <ChartWindow title="GBPUSD,M30" place="left-px top-px h-[268px] w-[625px]">
            <ChartM30 />
          </ChartWindow>
          <ChartWindow title="GBPUSD,H1" place="left-[630px] -top-[7px] h-[283px] w-[620px]">
            <ChartH1 />
          </ChartWindow>
          <ChartWindow title="GBPUSD_qtrenko,M1" place="-left-px top-[271px] h-[283px] w-[632px]">
            <ChartRenko />
          </ChartWindow>
          <ChartWindow title="GBPUSD,M3" place="left-[631px] top-[276px] h-[284px] w-[624px]">
            <ChartM3 />
          </ChartWindow>
        </div>
      </main>

      <div role="tablist" className="flex h-[19px] shrink-0 items-center border-t border-[#b8b8b8] pl-[27px] text-[#777]">
        {tabs.map(([name, width], i) => (
          <button
            key={i}
            role="tab"
            aria-selected={i === 1}
            className={`shrink-0 text-center whitespace-nowrap ${width} ${
              i === 1 ? 'h-[17px] self-start border border-t-0 border-[#333] bg-white text-black' : i === 0 ? '' : 'border-r border-[#aaa] leading-3'
            }`}
          >
            {name}
          </button>
        ))}
        <div className="ml-auto flex gap-3 pr-2 text-[7px] text-[#888]">
          <button aria-label="Scroll left">◀</button>
          <button aria-label="Scroll right">▶</button>
        </div>
      </div>

      <div className="flex h-[18px] shrink-0 items-center border-b border-[#d4d4d4]">
        <span className="flex-1 pl-0.5">For Help, press F1</span>
        <span className="h-full w-[110px] border-l border-[#bbb] pl-1 leading-[18px]">British Pound</span>
        <span className="h-full w-[84px] border-l border-[#bbb]" />
        <span className="h-full w-[59px] border-l border-[#bbb]" />
        <span className="h-full w-[59px] border-l border-[#bbb]" />
        <span className="h-full w-[58px] border-l border-[#bbb]" />
        <span className="h-full w-[57px] border-l border-[#bbb]" />
        <span className="h-full w-[56px] border-l border-[#bbb]" />
        <span className="flex h-full w-[98px] items-center gap-1 border-l border-[#bbb] pl-1">
          <svg viewBox="0 0 14 14" className="h-3.5 w-3.5">
            <path d="M1 1h8v12H3l-2-2z" fill="#3a9cd8" stroke="#1f6ca8" />
            <path d="M3 3h5M3 5h5" stroke="#d8f0fc" />
            <circle cx="10" cy="10" r="3.500" fill="#6cb83c" />
            <path d="M10 8v2h1.500" fill="none" stroke="#fff" />
          </svg>
          96.3 / 0.1 Mb
        </span>
      </div>

      <Taskbar />
    </div>
  )
}
